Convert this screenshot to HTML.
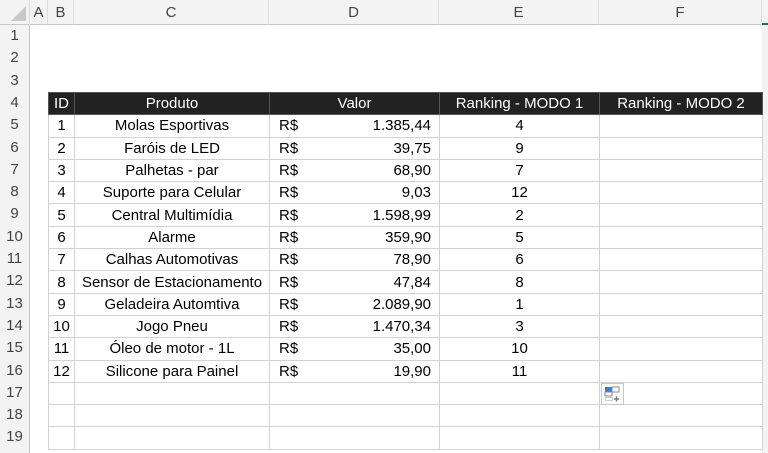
<!DOCTYPE html>
<html><head><meta charset="utf-8"><style>
*{margin:0;padding:0;box-sizing:border-box}
body{width:768px;height:453px;overflow:hidden;background:#fff;font-family:"Liberation Sans",sans-serif;position:relative}
.a{position:absolute}
#ch{left:0;top:0;width:768px;height:25px;background:#f3f3f3;border-bottom:1px solid #c8c8c8}
.chc{position:absolute;top:0;height:25px;line-height:25px;text-align:center;font-size:15px;color:#444;border-right:1px solid #dcdcdc}
#rh{left:0;top:25px;width:30px;height:428px;background:#f3f3f3;border-right:1px solid #c8c8c8}
.rn{position:absolute;left:0;width:29px;text-align:center;font-size:15px;color:#444;height:22.3px;line-height:22.3px}
table{position:absolute;left:48px;top:92px;border-collapse:collapse;table-layout:fixed;font-size:15px;color:#000}
td{height:22.3px;border:1px solid #d2d2d2;padding:0 3px;white-space:nowrap;overflow:hidden;text-align:center}
tr.h td{background:#222;color:#fff;border-color:#555}
.d{text-align:left;padding-left:9px}
.d span{float:right;padding-right:5px}
</style></head><body>
<div id="ch" class="a">
<div class="chc" style="left:0;width:30px;"><svg width="30" height="25"><polygon points="26,6 26,21 11,21" fill="#c8c8c8"/></svg></div>
<div class="chc" style="left:30px;width:18px">A</div>
<div class="chc" style="left:48px;width:26px">B</div>
<div class="chc" style="left:74px;width:195px">C</div>
<div class="chc" style="left:269px;width:170px">D</div>
<div class="chc" style="left:439px;width:160px">E</div>
<div class="chc" style="left:599px;width:163px">F</div>
<div class="a" style="left:762px;top:23px;width:6px;height:2px;background:#217346"></div>
</div>
<div id="rh" class="a">
<div class="rn" style="top:0">1</div><div class="rn" style="top:22.3px">2</div><div class="rn" style="top:44.6px">3</div><div class="rn" style="top:66.9px">4</div><div class="rn" style="top:89.2px">5</div><div class="rn" style="top:111.5px">6</div><div class="rn" style="top:133.8px">7</div><div class="rn" style="top:156.1px">8</div><div class="rn" style="top:178.4px">9</div><div class="rn" style="top:200.7px">10</div><div class="rn" style="top:223px">11</div><div class="rn" style="top:245.3px">12</div><div class="rn" style="top:267.6px">13</div><div class="rn" style="top:289.9px">14</div><div class="rn" style="top:312.2px">15</div><div class="rn" style="top:334.5px">16</div><div class="rn" style="top:356.8px">17</div><div class="rn" style="top:379.1px">18</div><div class="rn" style="top:401.4px">19</div>
</div>
<div class="a" style="left:762px;top:25px;width:6px;height:428px;background:#f3f3f3"></div>
<table>
<colgroup><col style="width:26px"><col style="width:195px"><col style="width:170px"><col style="width:160px"><col style="width:163px"></colgroup>
<tr class="h"><td>ID</td><td>Produto</td><td>Valor</td><td>Ranking - MODO 1</td><td>Ranking - MODO 2</td></tr>
<tr><td>1</td><td>Molas Esportivas</td><td class="d">R$<span>1.385,44</span></td><td>4</td><td></td></tr>
<tr><td>2</td><td>Faróis de LED</td><td class="d">R$<span>39,75</span></td><td>9</td><td></td></tr>
<tr><td>3</td><td>Palhetas - par</td><td class="d">R$<span>68,90</span></td><td>7</td><td></td></tr>
<tr><td>4</td><td>Suporte para Celular</td><td class="d">R$<span>9,03</span></td><td>12</td><td></td></tr>
<tr><td>5</td><td>Central Multimídia</td><td class="d">R$<span>1.598,99</span></td><td>2</td><td></td></tr>
<tr><td>6</td><td>Alarme</td><td class="d">R$<span>359,90</span></td><td>5</td><td></td></tr>
<tr><td>7</td><td>Calhas Automotivas</td><td class="d">R$<span>78,90</span></td><td>6</td><td></td></tr>
<tr><td>8</td><td>Sensor de Estacionamento</td><td class="d">R$<span>47,84</span></td><td>8</td><td></td></tr>
<tr><td>9</td><td>Geladeira Automtiva</td><td class="d">R$<span>2.089,90</span></td><td>1</td><td></td></tr>
<tr><td>10</td><td>Jogo Pneu</td><td class="d">R$<span>1.470,34</span></td><td>3</td><td></td></tr>
<tr><td>11</td><td>Óleo de motor - 1L</td><td class="d">R$<span>35,00</span></td><td>10</td><td></td></tr>
<tr><td>12</td><td>Silicone para Painel</td><td class="d">R$<span>19,90</span></td><td>11</td><td></td></tr>
<tr><td></td><td></td><td></td><td></td><td></td></tr>
<tr><td></td><td></td><td></td><td></td><td></td></tr>
<tr><td></td><td></td><td></td><td></td><td></td></tr>
</table>
<div class="a" style="left:601px;top:383px;width:23px;height:22px;border:1px solid #c8c8c8;background:#fff">
<svg width="21" height="20"><rect x="3" y="3" width="7" height="5" fill="#3b7ddd"/><rect x="10" y="3" width="7" height="5" fill="none" stroke="#888" stroke-width="1"/><rect x="3" y="8" width="7" height="4" fill="none" stroke="#888"/><rect x="3.5" y="13.5" width="7" height="3" fill="none" stroke="#999" stroke-dasharray="1,1"/><path d="M12 15h5M14.5 12.5v5" stroke="#777" stroke-width="1.5"/></svg>
</div>
</body></html>
